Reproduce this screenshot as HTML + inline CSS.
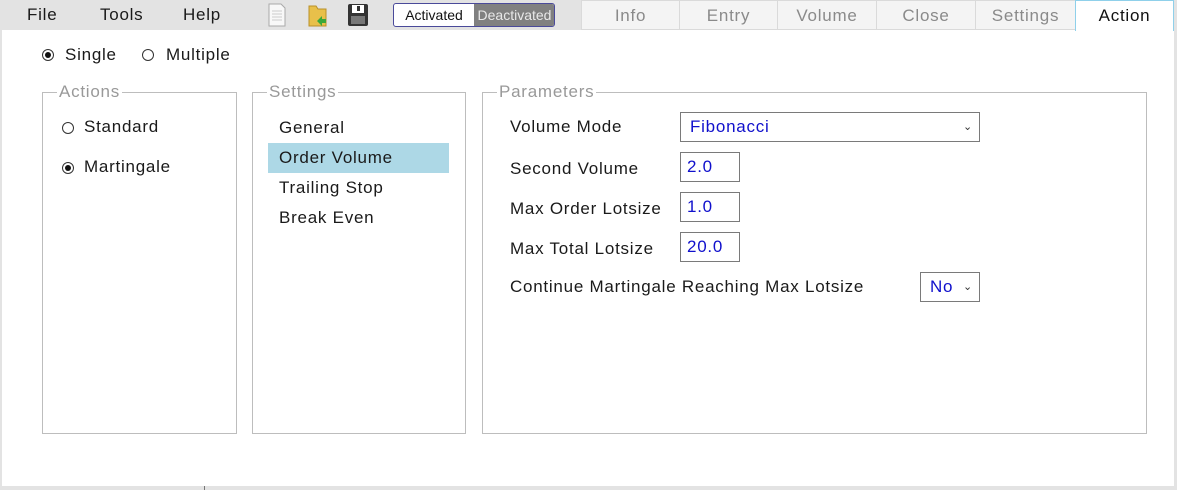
<!DOCTYPE html>
<html><head><style>
*{margin:0;padding:0;box-sizing:border-box}
body{width:1177px;height:490px;background:#e3e3e3;position:relative;overflow:hidden;font-family:"Liberation Sans",sans-serif;font-size:17px;color:#1a1a1a;letter-spacing:0.75px}
.a{position:absolute;white-space:nowrap}
.tab{position:absolute;top:0;height:30px;background:#f4f4f4;border:1px solid #dadada;color:#8a8a8a;text-align:center;line-height:30px;font-size:17px}
.grp{position:absolute;border:1px solid #bdbdbd}
.lg{position:absolute;top:-11px;background:#fff;color:#999;padding:0 2px;line-height:20px}
.rad{position:absolute;width:12px;height:12px;border:1px solid #333;border-radius:50%;background:#fff}
.rad.on::after{content:"";position:absolute;left:2px;top:2px;width:6px;height:6px;border-radius:50%;background:#111}
.box{position:absolute;border:1px solid #7a7a7a;background:#fff;color:#1010cc;padding-left:6px;line-height:28px}
.chev{position:absolute;right:6px;top:0;font-size:11px;color:#333}
</style></head><body>
<div class="a" style="left:2px;top:30px;width:1172px;height:456px;background:#fff"></div>
<div class="a" style="left:27px;top:5px">File</div>
<div class="a" style="left:100px;top:5px">Tools</div>
<div class="a" style="left:183px;top:5px">Help</div>
<svg class="a" style="left:266px;top:3px" width="22" height="24"><path d="M3 1h12l4 4v18H3z" fill="#f8f8f8" stroke="#aaa"/><path d="M6 8h10M6 11h10M6 14h10M6 17h10" stroke="#ccc"/></svg>
<svg class="a" style="left:307px;top:3px" width="22" height="24"><path d="M2 3h7l2 3h8v17H2z" fill="#e8c04a" stroke="#b8902a"/><path d="M10 18l5-5v3h4v4h-4v3z" fill="#3aa83a"/></svg>
<svg class="a" style="left:347px;top:3px" width="22" height="24"><rect x="1" y="1" width="20" height="22" rx="2" fill="#333"/><rect x="5" y="2" width="12" height="8" fill="#fff"/><rect x="10" y="3" width="3" height="5" fill="#333"/><rect x="4" y="13" width="14" height="8" fill="#777"/></svg>
<div class="a" style="left:393px;top:3px;width:162px;height:24px;border:1px solid #4a4a9a;border-radius:3px;background:#fff;overflow:hidden;letter-spacing:0">
<div class="a" style="left:0;top:0;width:80px;height:22px;line-height:22px;text-align:center;font-size:14px;color:#111">Activated</div>
<div class="a" style="left:80px;top:0;width:81px;height:22px;line-height:22px;text-align:center;font-size:14px;background:#808080;color:#e8e8e8">Deactivated</div>
</div>
<div class="tab" style="left:581px;width:99px">Info</div>
<div class="tab" style="left:679px;width:99px">Entry</div>
<div class="tab" style="left:777px;width:100px">Volume</div>
<div class="tab" style="left:876px;width:100px">Close</div>
<div class="tab" style="left:975px;width:101px">Settings</div>
<div class="tab" style="left:1075px;width:99px;height:31px;background:#fff;border-color:#8fd0ea;border-bottom:none;color:#111">Action</div>
<div class="rad on" style="left:42px;top:49px"></div><div class="a" style="left:65px;top:45px">Single</div>
<div class="rad" style="left:142px;top:49px"></div><div class="a" style="left:166px;top:45px">Multiple</div>

<div class="grp" style="left:42px;top:92px;width:195px;height:342px"><div class="lg" style="left:14px">Actions</div></div>
<div class="rad" style="left:62px;top:122px"></div><div class="a" style="left:84px;top:117px">Standard</div>
<div class="rad on" style="left:62px;top:162px"></div><div class="a" style="left:84px;top:157px">Martingale</div>

<div class="grp" style="left:252px;top:92px;width:214px;height:342px"><div class="lg" style="left:14px">Settings</div></div>
<div class="a" style="left:268px;top:143px;width:181px;height:30px;background:#add8e6"></div>
<div class="a" style="left:279px;top:118px">General</div>
<div class="a" style="left:279px;top:148px">Order Volume</div>
<div class="a" style="left:279px;top:178px">Trailing Stop</div>
<div class="a" style="left:279px;top:208px">Break Even</div>

<div class="grp" style="left:482px;top:92px;width:665px;height:342px"><div class="lg" style="left:14px">Parameters</div></div>
<div class="a" style="left:510px;top:117px">Volume Mode</div>
<div class="box" style="left:680px;top:112px;width:300px;height:30px;padding-left:9px">Fibonacci<span class="chev" style="line-height:28px">&#8964;</span></div>
<div class="a" style="left:510px;top:159px">Second Volume</div>
<div class="box" style="left:680px;top:152px;width:60px;height:30px">2.0</div>
<div class="a" style="left:510px;top:199px">Max Order Lotsize</div>
<div class="box" style="left:680px;top:192px;width:60px;height:30px">1.0</div>
<div class="a" style="left:510px;top:239px">Max Total Lotsize</div>
<div class="box" style="left:680px;top:232px;width:60px;height:30px">20.0</div>
<div class="a" style="left:510px;top:277px">Continue Martingale Reaching Max Lotsize</div>
<div class="box" style="left:920px;top:272px;width:60px;height:30px;padding-left:9px">No<span class="chev" style="line-height:28px">&#8964;</span></div>
<div class="a" style="left:204px;top:486px;width:1px;height:4px;background:#777"></div>
</body></html>
